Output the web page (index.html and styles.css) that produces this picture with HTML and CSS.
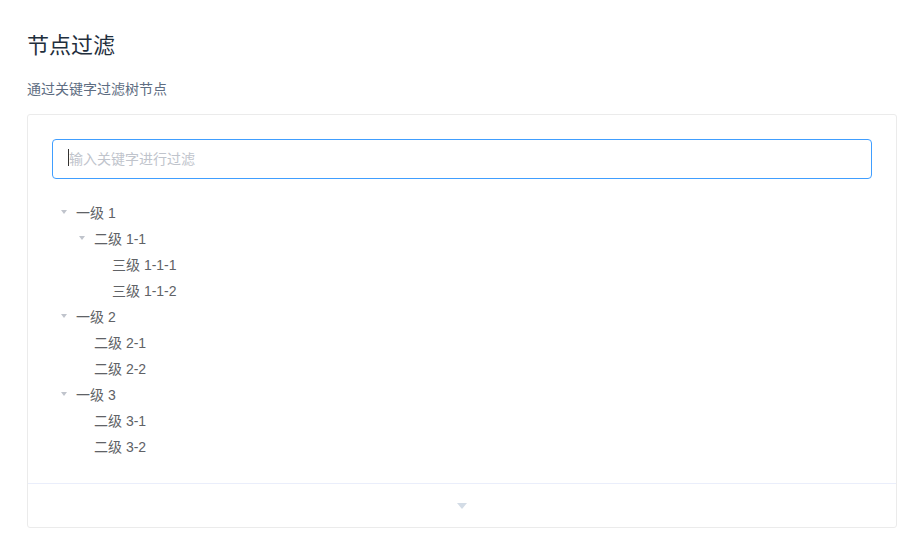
FILE: index.html
```html
<!DOCTYPE html>
<html lang="zh-CN">
<head>
<meta charset="utf-8">
<title>节点过滤</title>
<link rel="stylesheet" href="styles.css">
</head>
<body>
<div class="page">
  <h3 class="title">节点过滤</h3>
  <p class="desc">通过关键字过滤树节点</p>
  <div class="demo-block">
    <div class="source">
      <div class="input-wrap">
        <input class="filter-input" type="text" placeholder="输入关键字进行过滤">
        <span class="text-caret"></span>
      </div>
      <div class="tree">
        <div class="node lv1"><span class="caret"></span><span class="label">一级 1</span></div>
        <div class="node lv2"><span class="caret"></span><span class="label">二级 1-1</span></div>
        <div class="node lv3"><span class="caret leaf"></span><span class="label">三级 1-1-1</span></div>
        <div class="node lv3"><span class="caret leaf"></span><span class="label">三级 1-1-2</span></div>
        <div class="node lv1"><span class="caret"></span><span class="label">一级 2</span></div>
        <div class="node lv2"><span class="caret leaf"></span><span class="label">二级 2-1</span></div>
        <div class="node lv2"><span class="caret leaf"></span><span class="label">二级 2-2</span></div>
        <div class="node lv1"><span class="caret"></span><span class="label">一级 3</span></div>
        <div class="node lv2"><span class="caret leaf"></span><span class="label">二级 3-1</span></div>
        <div class="node lv2"><span class="caret leaf"></span><span class="label">二级 3-2</span></div>
      </div>
    </div>
    <div class="control"><span class="control-caret"></span></div>
  </div>
</div>
</body>
</html>
```
FILE: styles.css
```css
html, body {
  margin: 0;
  padding: 0;
  background: #fff;
}
body {
  font-family: "Liberation Sans", "Noto Sans CJK SC", sans-serif;
  -webkit-font-smoothing: antialiased;
}
.page {
  padding: 31px 27px 0 27px;
}
.title {
  margin: 0;
  font-size: 22px;
  line-height: 30px;
  font-weight: 400;
  color: #1f2f3d;
}
.desc {
  margin: 18px 0 14px 0;
  font-size: 14px;
  line-height: 21px;
  color: #5e6d82;
}
.demo-block {
  border: 1px solid #ebebeb;
  border-radius: 3px;
}
.source {
  padding: 24px;
}
.input-wrap {
  position: relative;
}
.filter-input {
  display: block;
  box-sizing: border-box;
  width: 100%;
  height: 40px;
  padding: 0 15px 0 16px;
  border: 1px solid #409eff;
  border-radius: 4px;
  outline: none;
  font-family: inherit;
  font-size: 14px;
  color: #606266;
  background: #fff;
}
.filter-input::placeholder {
  color: #c0c4cc;
}
.text-caret {
  position: absolute;
  left: 16px;
  top: 10px;
  width: 1px;
  height: 17px;
  background: #333;
}
.tree {
  margin-top: 20px;
}
.node {
  display: flex;
  align-items: center;
  height: 26px;
  font-size: 14px;
  color: #606266;
}
.lv2 { padding-left: 18px; }
.lv3 { padding-left: 36px; }
.caret {
  width: 24px;
  height: 26px;
  display: flex;
  align-items: center;
  justify-content: center;
  flex: none;
}
.caret::before {
  content: "";
  width: 0;
  height: 0;
  border-left: 3.5px solid transparent;
  border-right: 3.5px solid transparent;
  border-top: 4px solid #c0c4cc;
  margin-left: -1px;
}
.caret.leaf::before {
  border-top-color: transparent;
}
.label {
  line-height: 26px;
  padding-top: 2px;
}
.control {
  height: 43px;
  border-top: 1px solid #eaeefb;
  display: flex;
  align-items: center;
  justify-content: center;
}
.control-caret {
  width: 0;
  height: 0;
  border-left: 5px solid transparent;
  border-right: 5px solid transparent;
  border-top: 6px solid #d3dce6;
}
```
